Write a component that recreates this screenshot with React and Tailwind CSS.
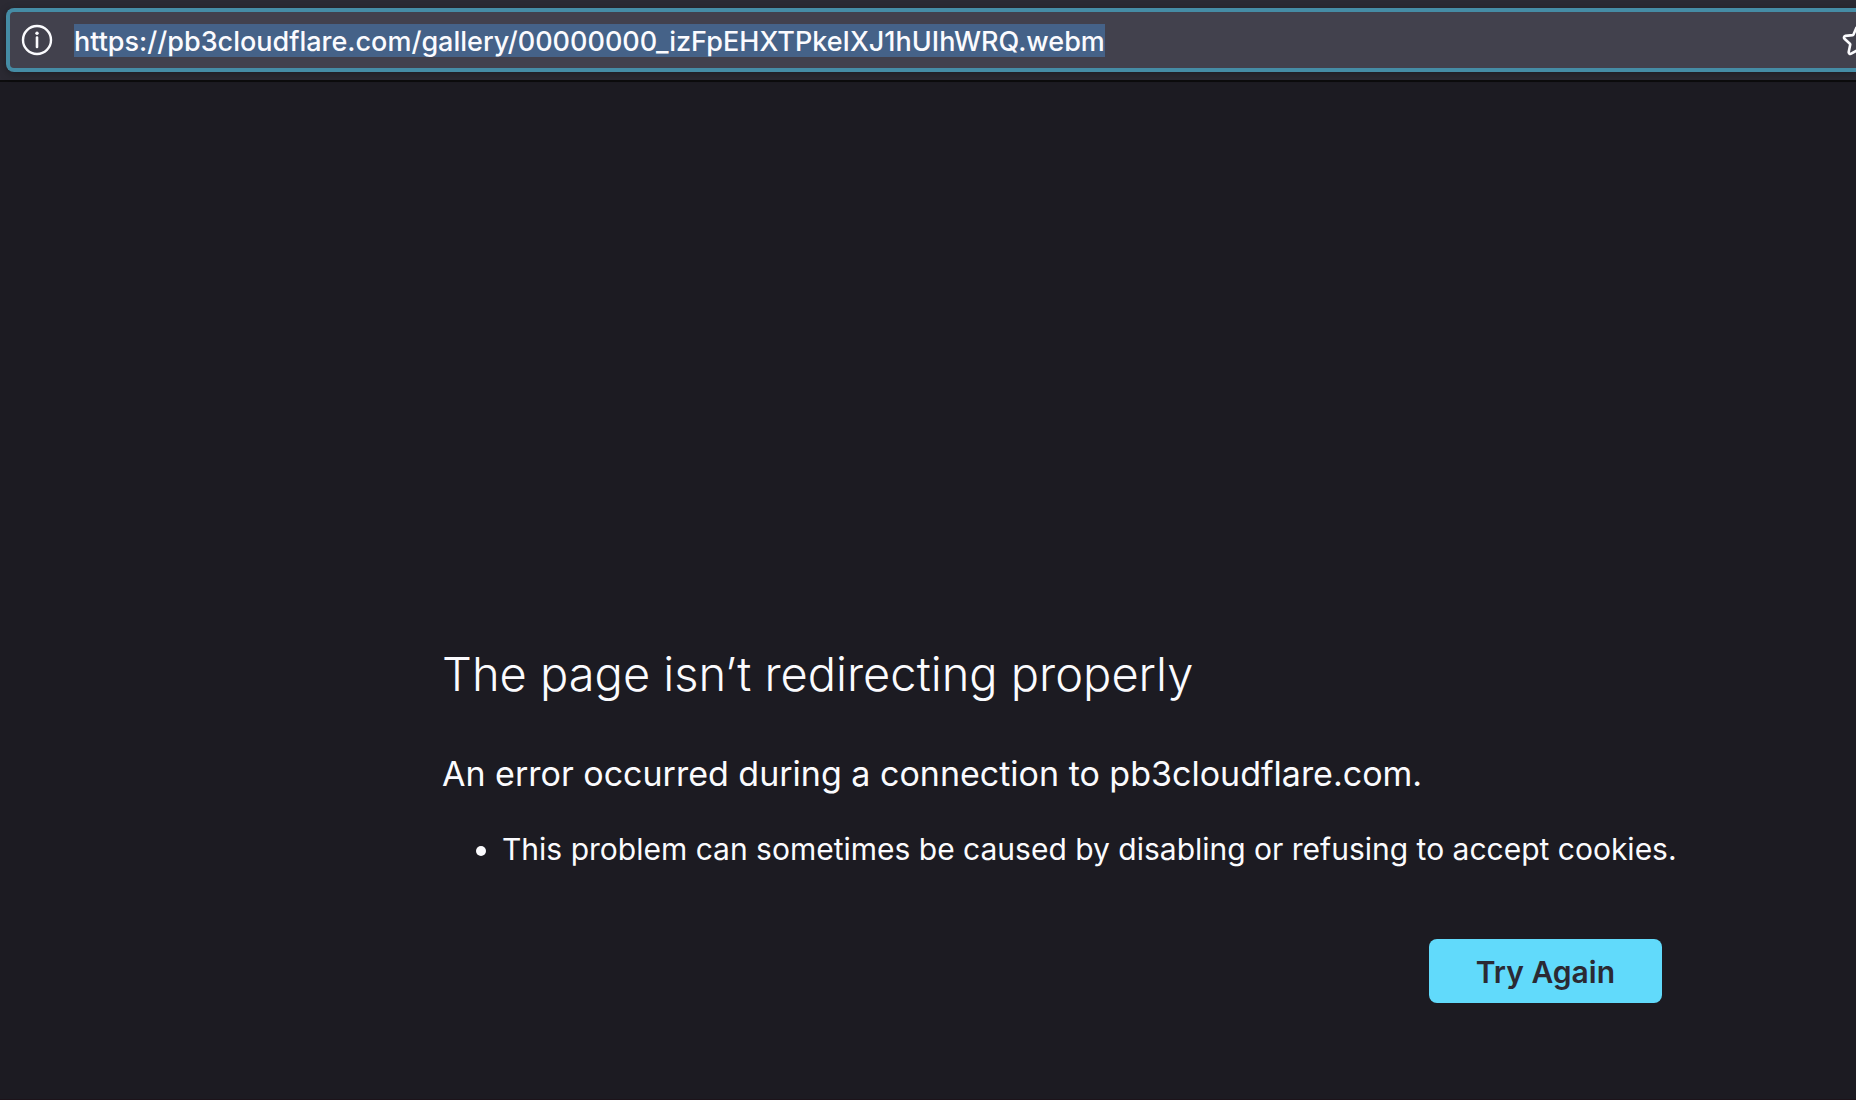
function InfoIcon() {
  return (
    <svg className="size-8" viewBox="0 0 32 32" fill="none" stroke="currentColor" strokeWidth="2.4" aria-hidden="true">
      <circle cx="16" cy="16" r="14" />
      <path d="M16 13.6V23" strokeWidth="2.6" strokeLinecap="round" />
      <circle cx="16" cy="9.2" r="1.7" fill="currentColor" stroke="none" />
    </svg>
  );
}

function StarIcon() {
  return (
    <svg className="size-8" viewBox="0 0 32 32" fill="none" stroke="currentColor" strokeWidth="2.6" strokeLinejoin="round" aria-hidden="true">
      <path d="M14.5 3.6a1.7 1.7 0 0 1 3 0l3 6.9a1 1 0 0 0 .8.6l7.3.8a1.7 1.7 0 0 1 .9 2.9l-5.4 5a1 1 0 0 0-.3 1l1.5 7.1a1.7 1.7 0 0 1-2.5 1.8l-6.3-3.6a1 1 0 0 0-1 0l-6.3 3.6a1.7 1.7 0 0 1-2.5-1.8l1.5-7.1a1 1 0 0 0-.3-1l-5.4-5a1.7 1.7 0 0 1 .9-2.9l7.3-.8a1 1 0 0 0 .8-.6z" />
    </svg>
  );
}

export default function App() {
  return (
    <div className="flex min-h-screen flex-col overflow-hidden border-b border-[#1c131a] bg-[#1c1b22] font-['Inter',sans-serif] text-[#fbfbfe]">
      <header className="border-b-2 border-[#0c0c0d] bg-[#2b2a33] py-2 pl-1.5">
        <div className="flex h-16 items-center rounded-l-lg border-4 border-r-0 border-[#458ca5] bg-[#42414d] pl-[11px] shadow-[0_2px_8px_rgba(0,0,0,0.3)]">
          <button type="button" aria-label="Site information" className="shrink-0">
            <InfoIcon />
          </button>
          <div className="ml-[21px] min-w-0 flex-1">
            <input
              type="text"
              aria-label="Address"
              spellCheck={false}
              defaultValue="https://pb3cloudflare.com/gallery/00000000_izFpEHXTPkeIXJ1hUIhWRQ.webm"
              className="block h-[33px] max-w-full field-sizing-content bg-[#456288] pt-0.5 text-[27px] leading-[31px] font-medium outline-none"
            />
          </div>
          <button type="button" aria-label="Bookmark this page" className="-mr-[18px] shrink-0">
            <StarIcon />
          </button>
        </div>
      </header>

      <main className="mr-[194px] ml-[442px] flex flex-1 flex-col justify-end pb-24">
        <h1 className="text-[47px] leading-[60px] font-light">The page isn’t redirecting properly</h1>
        <p className="mt-[50px] text-[34px] leading-10 whitespace-nowrap">
          An error occurred during a connection to pb3cloudflare.com.
        </p>
        <ul className="mt-[33px] list-disc pl-15 text-[30px] leading-11">
          <li className="whitespace-nowrap">
            This problem can sometimes be caused by disabling or refusing to accept cookies.
          </li>
        </ul>
        <button
          type="button"
          className="mt-[68px] h-16 self-end rounded-lg bg-[#61dafb] px-[47px] pt-0.5 text-[30px] leading-10 font-semibold text-[#2b2a33]"
        >
          Try Again
        </button>
      </main>
    </div>
  );
}
